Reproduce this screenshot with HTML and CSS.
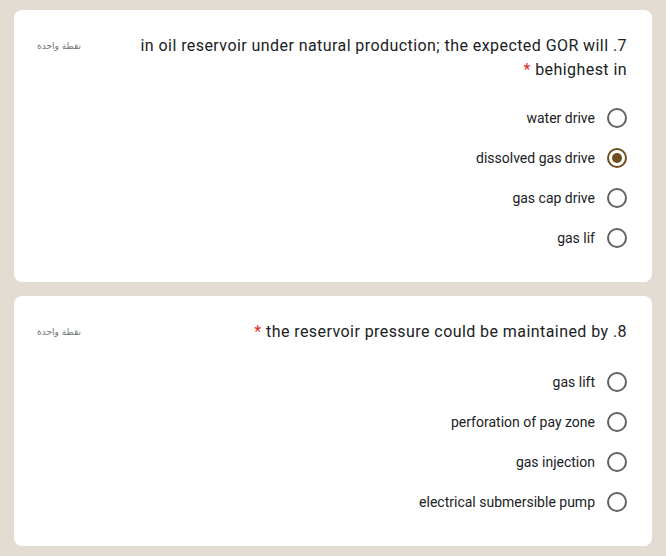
FILE: index.html
```html
<!DOCTYPE html>
<html lang="ar" dir="rtl">
<head>
  <meta charset="UTF-8">
  <meta name="viewport" content="width=device-width, initial-scale=1.0">
  <title>Quiz</title>
  <link rel="stylesheet" href="styles.css">
</head>
<body>

<div class="form">
  <div class="card">
    <div class="q-head">
      <div class="q-title" dir="rtl">7. in oil reservoir under natural production; the expected GOR will behighest in <span class="req">*</span></div>
      <div class="q-points">نقطة واحدة</div>
    </div>
    <div class="options">
      <div class="opt"><span class="radio"></span><span class="opt-text">water drive</span></div>
      <div class="opt"><span class="radio checked"></span><span class="opt-text">dissolved gas drive</span></div>
      <div class="opt"><span class="radio"></span><span class="opt-text">gas cap drive</span></div>
      <div class="opt"><span class="radio"></span><span class="opt-text">gas lif</span></div>
    </div>
  </div>

  <div class="card">
    <div class="q-head">
      <div class="q-title" dir="rtl">8. the reservoir pressure could be maintained by <span class="req">*</span></div>
      <div class="q-points">نقطة واحدة</div>
    </div>
    <div class="options">
      <div class="opt"><span class="radio"></span><span class="opt-text">gas lift</span></div>
      <div class="opt"><span class="radio"></span><span class="opt-text">perforation of pay zone</span></div>
      <div class="opt"><span class="radio"></span><span class="opt-text">gas injection</span></div>
      <div class="opt"><span class="radio"></span><span class="opt-text">electrical submersible pump</span></div>
    </div>
  </div>
</div>

</body>
</html>
```

FILE: styles.css
```css
body {
  margin: 0;
  background-color: #e2dcd3;
  font-family: Roboto, "Liberation Sans", sans-serif;
  color: #202124;
}
.form {
  display: flex;
  flex-direction: column;
  gap: 14px;
  padding: 10px 14px;
}
.card {
  background-color: #fff;
  border-radius: 8px;
  padding: 24px 25px 24px 23px;
}
.q-head {
  display: flex;
  align-items: flex-start;
  gap: 40px;
  min-height: 26px;
  margin-bottom: 16px;
}
.q-title {
  flex: 1;
  font-size: 16px;
  line-height: 24px;
  letter-spacing: 0.43px;
}
.req {
  color: #d93025;
}
.q-points {
  flex: 0 0 auto;
  margin-top: 6px;
  font-family: "DejaVu Sans", sans-serif;
  font-size: 9px;
  line-height: 12px;
  color: #70757a;
}
.options {
  display: flex;
  flex-direction: column;
}
.opt {
  display: flex;
  align-items: center;
  gap: 12px;
  height: 40px;
}
.opt-text {
  font-size: 14px;
}
.radio {
  width: 20px;
  height: 20px;
  box-sizing: border-box;
  border: 2px solid #5f6368;
  border-radius: 50%;
  display: flex;
  align-items: center;
  justify-content: center;
}
.radio.checked {
  border-color: #6e4e1f;
}
.radio.checked::after {
  content: "";
  width: 10px;
  height: 10px;
  border-radius: 50%;
  background-color: #6e4e1f;
}
```
